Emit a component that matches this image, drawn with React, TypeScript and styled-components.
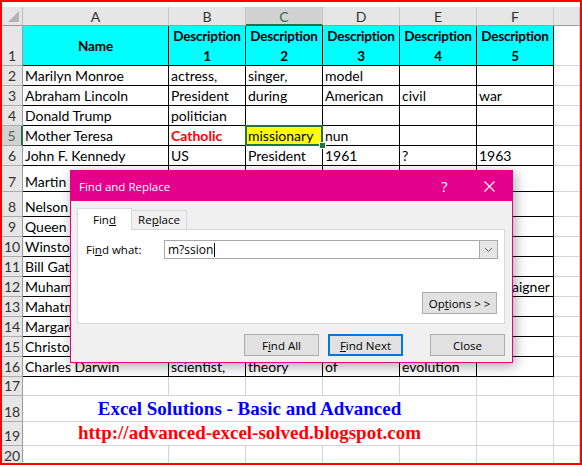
import React from 'react'
import styled, { createGlobalStyle, css } from 'styled-components'

const GlobalStyle = createGlobalStyle`
  html, body {
    margin: 0;
    padding: 0;
    background: #fff;
  }
  body {
    font-family: Lato, "Liberation Sans", sans-serif;
  }
`

const GRID = '#d4d4d4'
const INK = '#000'
const GREEN = '#217346'
const ACCENT = '#e3008c'

const ROW_HEIGHTS = [40, 20, 20, 20, 20, 20, 26, 25, 20, 20, 20, 20, 20, 20, 20, 20, 19, 26, 24]

const Frame = styled.div`
  position: relative;
  box-sizing: border-box;
  width: 582px;
  height: 465px;
  border: 2px solid #ff0000;
  background: #fff;
  overflow: hidden;
  display: flex;
  flex-direction: column;
`

const TopStrip = styled.div`
  height: 5px;
  flex: none;
`

const Sheet = styled.div`
  flex: 1;
  display: grid;
  grid-template-columns: 21px 146px repeat(5, 77px) 1fr;
  grid-template-rows: 19px ${ROW_HEIGHTS.map((h) => `${h}px`).join(' ')} 1fr;
  font-size: 14px;
  color: #000;
`

const Corner = styled.div`
  box-sizing: border-box;
  background: #e6e6e6;
  border-right: 1px solid #bdbdbd;
  border-bottom: 1px solid #9b9b9b;
  display: flex;
  align-items: flex-end;
  justify-content: flex-end;
  padding: 0 3px 3px 0;
`

const ColHead = styled.div<{ $selected?: boolean }>`
  box-sizing: border-box;
  background: ${(p) => (p.$selected ? '#d2d2d2' : '#e6e6e6')};
  border-right: 1px solid #c6c6c6;
  border-bottom: ${(p) => (p.$selected ? `2px solid ${GREEN}` : '1px solid #9b9b9b')};
  color: ${(p) => (p.$selected ? GREEN : '#333')};
  display: flex;
  align-items: center;
  justify-content: center;
  font-size: 14px;
  padding-top: 1px;
`

const RowHead = styled.div<{ $selected?: boolean }>`
  box-sizing: border-box;
  background: ${(p) => (p.$selected ? '#d2d2d2' : '#e6e6e6')};
  border-right: ${(p) => (p.$selected ? `2px solid ${GREEN}` : '1px solid #9b9b9b')};
  border-bottom: 1px solid #ababab;
  color: ${(p) => (p.$selected ? '#4e6b5a' : '#333')};
  display: flex;
  align-items: flex-end;
  justify-content: center;
  line-height: 19px;
  font-size: 14px;
  overflow: hidden;
`

const Cell = styled.div<{ $edge: string; $fill?: string; $tone?: string; $bold?: boolean; $picked?: boolean }>`
  position: relative;
  box-sizing: border-box;
  border-right: 1px solid ${(p) => p.$edge};
  border-bottom: 1px solid ${(p) => p.$edge};
  background: ${(p) => p.$fill ?? '#fff'};
  color: ${(p) => p.$tone ?? '#000'};
  font-weight: ${(p) => (p.$bold ? 700 : 400)};
  display: flex;
  align-items: flex-end;
  padding: 0 2px;
  line-height: 19px;
  white-space: nowrap;
  overflow: ${(p) => (p.$picked ? 'visible' : 'hidden')};
  ${(p) =>
    p.$picked &&
    css`
      &::after {
        content: '';
        position: absolute;
        left: -1px;
        top: -1px;
        right: -1px;
        bottom: -1px;
        border: 2px solid ${GREEN};
        z-index: 2;
      }
      &::before {
        content: '';
        position: absolute;
        right: -4px;
        bottom: -4px;
        width: 5px;
        height: 5px;
        background: ${GREEN};
        border: 1px solid #fff;
        z-index: 3;
      }
    `}
`

const HeadCell = styled.div`
  box-sizing: border-box;
  border-right: 1px solid ${INK};
  border-bottom: 1px solid ${INK};
  background: #00ffff;
  font-weight: 700;
  font-size: 13.5px;
  letter-spacing: -0.2px;
  display: flex;
  flex-direction: column;
  align-items: center;
  justify-content: center;
  line-height: 20px;
  white-space: nowrap;
  overflow: hidden;
`

const Banner = styled.div<{ $tone: string }>`
  grid-column: span 5;
  box-sizing: border-box;
  border-right: 1px solid ${GRID};
  border-bottom: 1px solid ${GRID};
  display: flex;
  align-items: flex-end;
  justify-content: center;
  font-family: "Liberation Serif", "Times New Roman", serif;
  font-weight: 700;
  font-size: 19px;
  line-height: 22px;
  color: ${(p) => p.$tone};
  padding-bottom: 1px;
  white-space: nowrap;
`

/* ---------- dialog ---------- */

const Dialog = styled.div`
  position: absolute;
  left: 68px;
  top: 168px;
  width: 443px;
  height: 193px;
  box-sizing: border-box;
  border: 1px solid ${ACCENT};
  background: #f0f0f0;
  box-shadow: 2px 3px 12px rgba(0, 0, 0, 0.35);
  display: flex;
  flex-direction: column;
  font-family: "Open Sans", "Noto Sans", sans-serif;
  font-size: 11.5px;
  color: #000;
  z-index: 10;
`

const TitleBar = styled.div`
  height: 30px;
  background: ${ACCENT};
  color: #fff;
  display: flex;
  align-items: center;
  padding-left: 8px;
  flex: none;
`

const Title = styled.div`
  flex: 1;
  font-size: 11.5px;
  padding-top: 1px;
`

const TitleButton = styled.div`
  width: 45px;
  height: 30px;
  display: flex;
  align-items: center;
  justify-content: center;
  font-size: 14.5px;
`

const Body = styled.div`
  flex: 1;
  display: flex;
  flex-direction: column;
  padding: 7px 7px 7px 6px;
`

const TabRow = styled.div`
  display: flex;
  align-items: flex-end;
  height: 22px;
  margin-bottom: -1px;
  position: relative;
  z-index: 1;
`

const Tab = styled.div<{ $active?: boolean }>`
  box-sizing: border-box;
  width: 55px;
  height: ${(p) => (p.$active ? 22 : 20)}px;
  border: 1px solid #d9d9d9;
  border-bottom: ${(p) => (p.$active ? 'none' : '1px solid #d9d9d9')};
  border-left: ${(p) => (p.$active ? '1px solid #d9d9d9' : 'none')};
  background: ${(p) => (p.$active ? '#fff' : '#f0f0f0')};
  display: flex;
  align-items: center;
  justify-content: center;
  line-height: 16px;
`

const Panel = styled.div`
  box-sizing: border-box;
  height: 95px;
  background: #fff;
  border: 1px solid #d9d9d9;
  padding: 10px 6px 0 8px;
  display: flex;
  flex-direction: column;
`

const FieldRow = styled.div`
  display: flex;
  align-items: center;
`

const Label = styled.div`
  width: 78px;
`

const Combo = styled.div`
  flex: 1;
  box-sizing: border-box;
  height: 19px;
  border: 1px solid #a9a9a9;
  display: flex;
`

const ComboText = styled.div`
  flex: 1;
  display: flex;
  align-items: center;
  padding-left: 3px;
  font-size: 12px;
`

const Caret = styled.span`
  display: inline-block;
  width: 1px;
  height: 14px;
  background: #000;
  margin-left: 1px;
`

const ComboButton = styled.div`
  width: 17px;
  border-left: 1px solid #a9a9a9;
  background: #e6e6e6;
  display: flex;
  align-items: center;
  justify-content: center;
`

const OptionsRow = styled.div`
  display: flex;
  justify-content: flex-end;
  margin-top: 33px;
  padding-right: 1px;
`

const Button = styled.div<{ $default?: boolean }>`
  box-sizing: border-box;
  width: 75px;
  height: 22px;
  background: #e1e1e1;
  border: ${(p) => (p.$default ? '2px solid #0078d7' : '1px solid #adadad')};
  display: flex;
  align-items: center;
  justify-content: center;
`

const ButtonRow = styled.div`
  display: flex;
  justify-content: flex-end;
  align-items: center;
  margin-top: 10px;
  gap: 9px;
`

const Spacer = styled.div`
  width: 9px;
`

/* ---------- data ---------- */

const COLS = ['A', 'B', 'C', 'D', 'E', 'F', 'G']

const HEADERS: [string, string?][] = [
  ['Name'],
  ['Description', '1'],
  ['Description', '2'],
  ['Description', '3'],
  ['Description', '4'],
  ['Description', '5'],
]

// rows 7-15 are mostly under the dialog, only column A and the tail of F show
const ROWS: string[][] = [
  ['Marilyn Monroe', 'actress,', 'singer,', 'model', '', ''],
  ['Abraham Lincoln', 'President', 'during', 'American', 'civil', 'war'],
  ['Donald Trump', 'politician', '', '', '', ''],
  ['Mother Teresa', 'Catholic', 'missionary', 'nun', '', ''],
  ['John F. Kennedy', 'US', 'President', '1961', '?', '1963'],
  ['Martin', '', '', '', '', ''],
  ['Nelson', '', '', '', '', ''],
  ['Queen', '', '', '', '', ''],
  ['Winston', '', '', '', '', ''],
  ['Bill Gates', '', '', '', '', ''],
  ['Muhammad', '', '', '', '', 'campaigner'],
  ['Mahatma', '', '', '', '', ''],
  ['Margaret', '', '', '', '', ''],
  ['Christopher', '', '', '', '', ''],
  ['Charles Darwin', 'scientist,', 'theory', 'of', 'evolution', ''],
]

function CornerMark() {
  return (
    <svg width="11" height="11" viewBox="0 0 11 11">
      <polygon points="11,0 11,11 0,11" fill="#b4b4b4" />
    </svg>
  )
}

function Chevron() {
  return (
    <svg width="9" height="6" viewBox="0 0 9 6">
      <polyline points="1,1 4.5,4.5 8,1" fill="none" stroke="#606060" strokeWidth="1" />
    </svg>
  )
}

function CloseGlyph() {
  return (
    <svg width="11" height="11" viewBox="0 0 11 11">
      <path d="M0.5 0.5 L10.5 10.5 M10.5 0.5 L0.5 10.5" stroke="#fff" strokeWidth="1.1" />
    </svg>
  )
}

function DataRow({ cells, index }: { cells: string[]; index: number }) {
  return (
    <>
      <RowHead $selected={index === 5}>{index}</RowHead>
      {cells.map((text, c) => {
        const catholic = index === 5 && c === 1
        const picked = index === 5 && c === 2
        return (
          <Cell
            key={c}
            $edge={INK}
            $tone={catholic ? '#ff0000' : undefined}
            $bold={catholic}
            $fill={picked ? '#ffff00' : undefined}
            $picked={picked}
          >
            {text}
          </Cell>
        )
      })}
      <Cell $edge={GRID} />
    </>
  )
}

function EmptyRow({ index }: { index: number }) {
  return (
    <>
      <RowHead>{index}</RowHead>
      {COLS.map((c) => (
        <Cell key={c} $edge={GRID} />
      ))}
    </>
  )
}

function BannerRow({ index, text, tone }: { index: number; text: string; tone: string }) {
  return (
    <>
      <RowHead>{index}</RowHead>
      <Banner $tone={tone}>{text}</Banner>
      <Cell $edge={GRID} />
      <Cell $edge={GRID} />
    </>
  )
}

function FindDialog() {
  return (
    <Dialog>
      <TitleBar>
        <Title>Find and Replace</Title>
        <TitleButton>?</TitleButton>
        <TitleButton>
          <CloseGlyph />
        </TitleButton>
      </TitleBar>
      <Body>
        <TabRow>
          <Tab $active>
            <span>
              Fin<u>d</u>
            </span>
          </Tab>
          <Tab>
            <span>
              Re<u>p</u>lace
            </span>
          </Tab>
        </TabRow>
        <Panel>
          <FieldRow>
            <Label>
              Fi<u>n</u>d what:
            </Label>
            <Combo>
              <ComboText>
                m?ssion
                <Caret />
              </ComboText>
              <ComboButton>
                <Chevron />
              </ComboButton>
            </Combo>
          </FieldRow>
          <OptionsRow>
            <Button>
              <span>
                Op<u>t</u>ions &gt; &gt;
              </span>
            </Button>
          </OptionsRow>
        </Panel>
        <ButtonRow>
          <Button>
            <span>
              F<u>i</u>nd All
            </span>
          </Button>
          <Button $default>
            <span>
              <u>F</u>ind Next
            </span>
          </Button>
          <Spacer />
          <Button>Close</Button>
        </ButtonRow>
      </Body>
    </Dialog>
  )
}

export default function App() {
  return (
    <>
      <GlobalStyle />
      <Frame>
        <TopStrip />
        <Sheet>
          <Corner>
            <CornerMark />
          </Corner>
          {COLS.map((c) => (
            <ColHead key={c} $selected={c === 'C'}>
              {c === 'G' ? '' : c}
            </ColHead>
          ))}

          <RowHead>1</RowHead>
          {HEADERS.map(([top, bottom], i) => (
            <HeadCell key={i}>
              <span>{top}</span>
              {bottom && <span>{bottom}</span>}
            </HeadCell>
          ))}
          <Cell $edge={GRID} />

          {ROWS.map((cells, i) => (
            <DataRow key={i} cells={cells} index={i + 2} />
          ))}

          <EmptyRow index={17} />
          <BannerRow index={18} text="Excel Solutions - Basic and Advanced" tone="#0000ff" />
          <BannerRow index={19} text="http://advanced-excel-solved.blogspot.com" tone="#ff0000" />
          <EmptyRow index={20} />
        </Sheet>
        <FindDialog />
      </Frame>
    </>
  )
}
